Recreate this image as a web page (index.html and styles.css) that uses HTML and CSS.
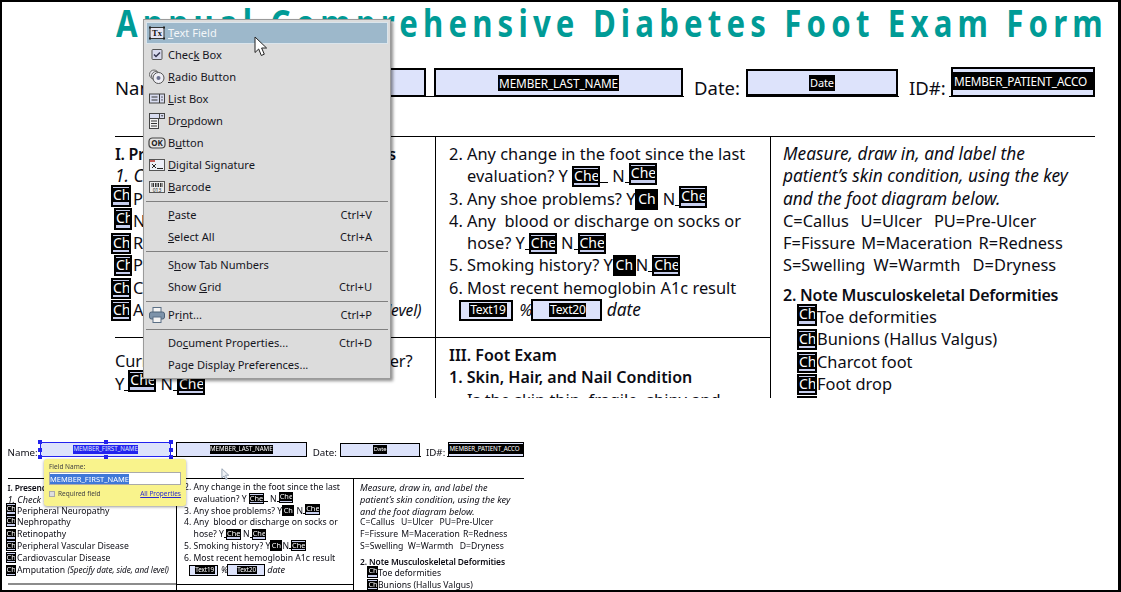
FILE: index.html
```html
<!DOCTYPE html>
<html lang="en">
<head>
<meta charset="utf-8">
<title>Annual Comprehensive Diabetes Foot Exam Form</title>
<link rel="stylesheet" href="styles.css">
</head>
<body>
<div class="frame">
  <section class="upper">
    <h1 class="title">Annual Comprehensive Diabetes Foot Exam Form</h1>
    <div class="doc">
      <div class="namerow">
        <span class="nlabel">Name:</span>
        <span class="ul ul-names">
          <span class="fld f-first"><span class="hl">MEMBER_FIRST_NAME</span></span>
          <span class="fld f-last"><span class="hl">MEMBER_LAST_NAME</span></span>
        </span>
        <span class="nlabel l-date">Date:</span>
        <span class="ul"><span class="fld f-date"><span class="hl">Date</span></span></span>
        <span class="nlabel l-id">ID#:</span>
        <span class="ul ul-id"><span class="fld f-id"><span class="hl">MEMBER_PATIENT_ACCO</span></span></span>
      </div>
      <div class="table">
        <div class="col c1">
          <div class="row b tight">I. Presence of Diabetes Complications</div>
          <div class="row"><i>1. Check all that apply</i></div>
          <div class="row chkrow"><span class="w w-ch up4 shift"><span class="t">Ch</span></span>Peripheral Neuropathy</div>
          <div class="row chkrow"><span class="w w-nar up2 ind"><span class="t">Ch</span></span>Nephropathy</div>
          <div class="row chkrow"><span class="w w-ch shift"><span class="t">Ch</span></span>Retinopathy</div>
          <div class="row chkrow"><span class="w w-nar ind"><span class="t">Ch</span></span>Peripheral Vascular Disease</div>
          <div class="row chkrow"><span class="w w-ch shift"><span class="t">Ch</span></span>Cardiovascular Disease</div>
          <div class="row chkrow"><span class="w w-ch shift"><span class="t">Ch</span></span>Amputation <i class="small-i">(Specify date, side, and level)</i></div>
          <div class="rule"></div>
          <div class="row cur">Current tobacco or other nicotine user?</div>
          <div class="row">Y<span class="blank b-s"></span><span class="w w-che up4"><span class="t">Che</span></span> N<span class="blank b-s"></span><span class="w w-che"><span class="t">Che</span></span></div>
        </div>
        <div class="col c2">
          <div class="sec">
            <div class="row hang"><span class="n">2.</span>Any change in the foot since the last</div>
            <div class="row ind-t">evaluation? Y <span class="w w-che"><span class="t">Cheı</span></span><span class="blank b-t"></span> N<span class="blank b-s"></span><span class="w w-che up2"><span class="t">Che</span></span></div>
            <div class="row hang"><span class="n">3.</span>Any shoe problems? Y<span class="w w-ch solid"><span class="t">Ch</span></span> N<span class="blank b-s"></span><span class="w w-che up2"><span class="t">Che</span></span></div>
            <div class="row hang"><span class="n">4.</span>Any &nbsp;blood or discharge on socks or</div>
            <div class="row ind-t">hose? Y<span class="blank b-s"></span><span class="w w-che"><span class="t">Che</span></span> N<span class="blank b-s"></span><span class="w w-che"><span class="t">Che</span></span></div>
            <div class="row hang"><span class="n">5.</span>Smoking history? Y<span class="w w-ch solid"><span class="t">Ch</span></span>N<span class="blank b-s"></span><span class="w w-che"><span class="t">Cheı</span></span></div>
            <div class="row hang"><span class="n">6.</span>Most recent hemoglobin A1c result</div>
            <div class="row txtrow"><span class="w w-t19"><span class="t">Text19</span></span> <span class="pct">%</span><span class="w w-t20"><span class="t">Text20</span></span> <i>date</i></div>
          </div>
          <div class="sec sec2">
            <div class="row b">III. Foot Exam</div>
            <div class="row b hang-b">1. Skin, Hair, and Nail Condition</div>
            <div class="row ind-t">Is the skin thin, fragile, shiny and</div>
          </div>
        </div>
        <div class="col c3">
          <div class="row"><i>Measure, draw in, and label the</i></div>
          <div class="row"><i>patient’s skin condition, using the key</i></div>
          <div class="row"><i>and the foot diagram below.</i></div>
          <div class="row key1">C=Callus &nbsp; U=Ulcer &nbsp; PU=Pre-Ulcer</div>
          <div class="row key2">F=Fissure &nbsp;M=Maceration &nbsp;R=Redness</div>
          <div class="row key3">S=Swelling &nbsp;W=Warmth &nbsp; D=Dryness</div>
          <div class="row b note">2. Note Musculoskeletal Deformities</div>
          <div class="row c3chk"><span class="w w-ch up2"><span class="t">Ch</span></span>Toe deformities</div>
          <div class="row c3chk"><span class="w w-ch"><span class="t">Ch</span></span>Bunions (Hallus Valgus)</div>
          <div class="row c3chk"><span class="w w-ch"><span class="t">Ch</span></span>Charcot foot</div>
          <div class="row c3chk"><span class="w w-ch"><span class="t">Ch</span></span>Foot drop</div>
          <div class="row c3chk"><span class="w w-ch"><span class="t">Ch</span></span></div>
        </div>
      </div>
    </div>
  </section>

  <section class="lower">
    <div class="doc doc-small">
      <div class="namerow">
        <span class="nlabel">Name:</span>
        <span class="ul ul-names ul-none">
          <span class="fld f-first f-sel"><span class="hl">MEMBER_FIRST_NAME</span>
            <i class="hd h1"></i><i class="hd h2"></i><i class="hd h3"></i><i class="hd h4"></i><i class="hd h5"></i><i class="hd h6"></i><i class="hd h7"></i><i class="hd h8"></i>
          </span>
          <span class="fld f-last"><span class="hl">MEMBER_LAST_NAME</span></span>
        </span>
        <span class="nlabel l-date">Date:</span>
        <span class="ul"><span class="fld f-date"><span class="hl">Date</span></span></span>
        <span class="nlabel l-id">ID#:</span>
        <span class="ul ul-id"><span class="fld f-id"><span class="hl">MEMBER_PATIENT_ACCO</span></span></span>
      </div>
      <div class="table">
        <div class="col c1">
          <div class="row b tight">I. Presence of Diabetes Complications</div>
          <div class="row"><i>1. Check all that apply</i></div>
          <div class="row chkrow"><span class="w w-ch up4 shift"><span class="t">Ch</span></span>Peripheral Neuropathy</div>
          <div class="row chkrow"><span class="w w-ch up2 shift"><span class="t">Ch</span></span>Nephropathy</div>
          <div class="row chkrow"><span class="w w-ch shift"><span class="t">Ch</span></span>Retinopathy</div>
          <div class="row chkrow"><span class="w w-ch shift"><span class="t">Ch</span></span>Peripheral Vascular Disease</div>
          <div class="row chkrow"><span class="w w-ch shift"><span class="t">Ch</span></span>Cardiovascular Disease</div>
          <div class="row chkrow"><span class="w w-ch shift"><span class="t">Ch</span></span>Amputation <i class="small-i">(Specify date, side, and level)</i></div>
          <div class="rule"></div>
        </div>
        <div class="col c2">
          <div class="sec">
            <div class="row hang"><span class="n">2.</span>Any change in the foot since the last</div>
            <div class="row ind-t">evaluation? Y <span class="w w-che"><span class="t">Cheı</span></span><span class="blank b-t"></span> N<span class="blank b-s"></span><span class="w w-che up2"><span class="t">Che</span></span></div>
            <div class="row hang"><span class="n">3.</span>Any shoe problems? Y<span class="w w-ch solid"><span class="t">Ch</span></span> N<span class="blank b-s"></span><span class="w w-che up2"><span class="t">Che</span></span></div>
            <div class="row hang"><span class="n">4.</span>Any &nbsp;blood or discharge on socks or</div>
            <div class="row ind-t">hose? Y<span class="blank b-s"></span><span class="w w-che"><span class="t">Che</span></span> N<span class="blank b-s"></span><span class="w w-che"><span class="t">Che</span></span></div>
            <div class="row hang"><span class="n">5.</span>Smoking history? Y<span class="w w-ch solid"><span class="t">Ch</span></span>N<span class="blank b-s"></span><span class="w w-che"><span class="t">Cheı</span></span></div>
            <div class="row hang"><span class="n">6.</span>Most recent hemoglobin A1c result</div>
            <div class="row txtrow"><span class="w w-t19"><span class="t">Text19</span></span> <span class="pct">%</span><span class="w w-t20"><span class="t">Text20</span></span> <i>date</i></div>
          </div>
          <div class="sec sec2">
            <div class="row b">III. Foot Exam</div>
          </div>
        </div>
        <div class="col c3">
          <div class="row"><i>Measure, draw in, and label the</i></div>
          <div class="row"><i>patient’s skin condition, using the key</i></div>
          <div class="row"><i>and the foot diagram below.</i></div>
          <div class="row key1">C=Callus &nbsp; U=Ulcer &nbsp; PU=Pre-Ulcer</div>
          <div class="row key2">F=Fissure &nbsp;M=Maceration &nbsp;R=Redness</div>
          <div class="row key3">S=Swelling &nbsp;W=Warmth &nbsp; D=Dryness</div>
          <div class="row b note">2. Note Musculoskeletal Deformities</div>
          <div class="row c3chk"><span class="w w-ch up2"><span class="t">Ch</span></span>Toe deformities</div>
          <div class="row c3chk"><span class="w w-ch"><span class="t">Ch</span></span>Bunions (Hallus Valgus)</div>
        </div>
      </div>
    </div>

    <div class="popup">
      <div class="pop-label">Field Name:</div>
      <div class="pop-input"><span class="pop-sel">MEMBER_FIRST_NAME</span></div>
      <div class="pop-foot">
        <span class="pop-check"><span class="pop-box"></span>Required field</span>
        <span class="pop-link">All Properties</span>
      </div>
    </div>
    <svg class="cursor-small" viewBox="0 0 12 18" aria-hidden="true"><path d="M1 1v13l3-3 2.500 5 2-1-2.500-5h4.500z" fill="#eef1f5" stroke="#7b8ba0" stroke-width="1"/></svg>
  </section>

  <nav class="menu">
    <div class="item active">
      <span class="ic"><svg viewBox="0 0 18 18"><rect x="2" y="3.500" width="14" height="11" fill="#e6e6f2" stroke="#333" stroke-width="1"/><rect x="1" y="2.500" width="2" height="2" fill="#222"/><rect x="15" y="2.500" width="2" height="2" fill="#222"/><rect x="1" y="13.500" width="2" height="2" fill="#222"/><rect x="15" y="13.500" width="2" height="2" fill="#222"/><text x="9" y="12" class="svg-tx">Tx</text></svg></span>
      <span class="lb"><u>T</u>ext Field</span>
    </div>
    <div class="item">
      <span class="ic"><svg viewBox="0 0 18 18"><rect x="4" y="3.500" width="10" height="10" rx="1" fill="#d8daee" stroke="#555" stroke-width="1"/><path d="M6 8.500l2 2 4-4" fill="none" stroke="#33344f" stroke-width="1.500"/></svg></span>
      <span class="lb">Chec<u>k</u> Box</span>
    </div>
    <div class="item">
      <span class="ic"><svg viewBox="0 0 18 18"><circle cx="6" cy="6.500" r="4.500" fill="#e8e8ee" stroke="#666"/><circle cx="8" cy="8" r="4.500" fill="#e8e8ee" stroke="#666"/><circle cx="10.500" cy="10" r="5.500" fill="#eeeef4" stroke="#555"/><circle cx="10.500" cy="10" r="2" fill="#6a6f8f"/></svg></span>
      <span class="lb"><u>R</u>adio Button</span>
    </div>
    <div class="item">
      <span class="ic"><svg viewBox="0 0 18 18"><rect x="1.500" y="4" width="15" height="9" fill="#d8dcf0" stroke="#444"/><path d="M11.500 4v9M3.500 7h6M3.500 10h6" stroke="#333" fill="none"/><path d="M13 7.500h2l-1-1.500zM13 9.500h2l-1 1.500z" fill="#333"/></svg></span>
      <span class="lb"><u>L</u>ist Box</span>
    </div>
    <div class="item">
      <span class="ic"><svg viewBox="0 0 18 18"><rect x="1.500" y="1.500" width="15" height="5" fill="#d8dcf0" stroke="#444"/><path d="M11.500 1.500v5" stroke="#444"/><path d="M12.800 3.200h2.600l-1.300 1.600z" fill="#333"/><rect x="1.500" y="6.500" width="9" height="10" fill="#f2f2f2" stroke="#444"/><path d="M3 9h6M3 11.500h6M3 14h6" stroke="#333" fill="none"/></svg></span>
      <span class="lb">Dr<u>o</u>pdown</span>
    </div>
    <div class="item">
      <span class="ic"><svg viewBox="0 0 18 18"><rect x="1" y="4" width="16" height="10" rx="3.500" fill="#e4e4e4" stroke="#444" stroke-width="1.200"/><text x="9" y="12" class="svg-ok">OK</text></svg></span>
      <span class="lb">B<u>u</u>tton</span>
    </div>
    <div class="item">
      <span class="ic"><svg viewBox="0 0 18 18"><rect x="1.500" y="3.500" width="15" height="11" fill="#eceef8" stroke="#555"/><rect x="2" y="4" width="5" height="2" fill="#c05a5a"/><path d="M4 8l4 4M8 8l-4 4" stroke="#222" fill="none"/><path d="M9 12.500h6" stroke="#222"/></svg></span>
      <span class="lb"><u>D</u>igital Signature</span>
    </div>
    <div class="item">
      <span class="ic"><svg viewBox="0 0 18 18"><rect x="1.500" y="3.500" width="15" height="11" fill="#ececec" stroke="#555"/><path d="M4 5v4M5.500 5v4M7.500 5v4M9 5v4M10.500 5v4M12.500 5v4M14 5v4" stroke="#333" fill="none"/><text x="9" y="13.500" class="svg-bar">013</text></svg></span>
      <span class="lb"><u>B</u>arcode</span>
    </div>
    <div class="sep"></div>
    <div class="item"><span class="ic"></span><span class="lb"><u>P</u>aste</span><span class="sc">Ctrl+V</span></div>
    <div class="item"><span class="ic"></span><span class="lb"><u>S</u>elect All</span><span class="sc">Ctrl+A</span></div>
    <div class="sep"></div>
    <div class="item"><span class="ic"></span><span class="lb">S<u>h</u>ow Tab Numbers</span></div>
    <div class="item"><span class="ic"></span><span class="lb">Show <u>G</u>rid</span><span class="sc">Ctrl+U</span></div>
    <div class="sep"></div>
    <div class="item">
      <span class="ic"><svg viewBox="0 0 18 18"><rect x="5" y="1.500" width="8" height="5" fill="#f4f4f4" stroke="#5a6f85"/><rect x="1.500" y="6" width="15" height="7" rx="2" fill="#7d93aa" stroke="#4d6277"/><rect x="5" y="11" width="8" height="5.500" fill="#f4f4f4" stroke="#5a6f85"/></svg></span>
      <span class="lb">Pr<u>i</u>nt...</span><span class="sc">Ctrl+P</span>
    </div>
    <div class="sep"></div>
    <div class="item"><span class="ic"></span><span class="lb">Do<u>c</u>ument Properties...</span><span class="sc">Ctrl+D</span></div>
    <div class="item"><span class="ic"></span><span class="lb">Page Displa<u>y</u> Preferences...</span></div>
  </nav>

  <svg class="cursor" viewBox="0 0 14 22" aria-hidden="true"><path d="M1 1v15.500l3.700-3.500 2.600 6.500 3-1.300-2.700-6.200h5z" fill="#fff" stroke="#222" stroke-width="1"/></svg>
</div>
</body>
</html>
```
FILE: styles.css
```css
* { box-sizing: border-box; }
html, body { margin: 0; padding: 0; background: #fff; }
body { font-family: "Noto Sans", "Open Sans", sans-serif; color: #0c0c14; }

.frame {
  position: relative;
  width: 1121px;
  height: 592px;
  border: solid #000;
  border-width: 2px 3px 2px 2px;
  overflow: hidden;
  background: #fff;
  display: flex;
  flex-direction: column;
}

.upper { height: 396px; flex: none; overflow: hidden; padding-left: 113px; }
.lower { flex: 1; overflow: hidden; position: relative; padding: 43px 0 0 5.6px; filter: blur(.45px); }

.title {
  margin: 0 0 0 1px;
  height: 64px;
  font-size: 38px;
  line-height: 40px;
  font-weight: 700;
  letter-spacing: 6.300px;
  white-space: nowrap;
  color: #009b96;
  transform: scaleX(.82);
  transform-origin: left top;
}

.doc { width: 980px; font-size: 16.400px; }
.doc-small { zoom: .527; }
.doc i { font-size: 17.300px; }
.doc .small-i { font-size: 15.500px; letter-spacing: -.1px; }
.doc .hd { font-size: 0; }

.namerow { display: flex; height: 70px; align-items: flex-start; font-size: 18.500px; }
.nlabel { width: 61px; flex: none; margin-top: 9px; line-height: 26px; }
.l-date { width: 52px; margin-left: 10px; }
.l-id { width: 40px; margin-left: 10px; }
.ul { display: flex; border-bottom: 1px solid #000; height: 31px; padding-right: 1px; align-items: flex-start; }
.ul-names { gap: 8px; }
.ul-id { padding-left: 2px; padding-right: 0; }

.fld {
  display: flex;
  align-items: center;
  justify-content: center;
  border: 2px solid #000;
  background: #dde3fb;
  font-size: 11.800px;
  flex: none;
  position: relative;
  white-space: nowrap;
}
.hl { background: #000; color: #fff; line-height: 16px; padding: 0 1px; letter-spacing: -.1px; }
.f-first { width: 250px; height: 29px; margin-top: 2px; }
.f-last { width: 249px; height: 29px; margin-top: 2px; }
.f-date { width: 152px; height: 27px; margin-top: 3px; font-size: 11px; }
.f-id { width: 144px; height: 30px; margin-top: 1px; overflow: hidden; justify-content: flex-start; align-items: flex-start; }
.f-id .hl { margin-top: 3px; width: 100%; line-height: 18px; padding-left: 1px; letter-spacing: -.2px; }

.f-sel { border: 2px solid #2222ee; }
.f-sel .hl { background: #2222ee; color: #dde3fb; }
.hd { position: absolute; width: 7px; height: 7px; background: #2222ee; }
.h1 { left: -5px; top: -5px; }
.h2 { left: calc(50% - 3px); top: -5px; }
.h3 { right: -5px; top: -5px; }
.h4 { left: -5px; top: calc(50% - 3px); }
.h5 { right: -5px; top: calc(50% - 3px); }
.h6 { left: -5px; bottom: -5px; }
.h7 { left: calc(50% - 3px); bottom: -5px; }
.h8 { right: -5px; bottom: -5px; }

.table { display: grid; grid-template-columns: 320px 335px 325px; border-top: 1px solid #000; height: 600px; }
.col { padding-top: 6px; min-width: 0; }
.c2, .c3 { border-left: 1px solid #000; }
.c2 { padding: 0; }
.c3 { padding-left: 12px; }
.sec { padding: 6px 0 0 13px; height: 201px; border-bottom: 1px solid #000; }
.sec2 { height: auto; border-bottom: 0; padding-top: 6px; }

.row { height: 22.300px; line-height: 22.300px; white-space: nowrap; }
.b { font-weight: 600; font-size: 16px; }
.tight { letter-spacing: -.33px; }
.n { display: inline-block; width: 18px; }
.ind-t { padding-left: 18px; }
.rule { border-bottom: 1px solid #000; height: 17px; }
.doc-small .rule { border-bottom: 4px solid #8c8c8c; }
.cur { margin-top: 12px; letter-spacing: -.13px; }
.note { margin-top: 7px; letter-spacing: -.22px; }
.key1 { word-spacing: -.3px; }
.key2 { word-spacing: -1.200px; }
.key3 { word-spacing: -.2px; }
.c3chk { padding-left: 14px; }
.chkrow { margin-left: -4px; }
.txtrow { padding-left: 10px; }
.pct { margin-left: 2px; font-style: italic; }

.w {
  display: inline-block;
  overflow: hidden;
  height: 21px;
  margin: -8px 0 -4px;
  vertical-align: -1px;
  border: 2px solid #000;
  background: #c8cfee;
  font-size: 14px;
  text-align: center;
}
.t { display: block; background: #000; color: #fff; height: 14px; line-height: 14px; margin-top: 1px; overflow: hidden; white-space: nowrap; }
.up2 { vertical-align: 1px; height: 22px; }
.up4 { vertical-align: 2px; height: 22px; }
.w-ch { width: 20px; }
.w-nar { width: 18px; }
.w-che { width: 28px; }
.solid { background: #000; width: 23px; }
.shift { margin-right: 2px; }
.ind { margin-left: 3px; margin-right: 1px; }
.w-t19, .w-t20 { background: #dde3fb; height: 21px; }
.w-t19 { width: 54px; }
.w-t20 { width: 71px; height: 22px; margin-left: -1px; margin-right: 0; }
.w-t19 .t { margin: 1px 4px 0 8px; font-size: 12px; letter-spacing: -.2px; }
.w-t20 .t { margin: 2px 14px 0 16px; font-size: 12px; letter-spacing: -.2px; }
.blank { display: inline-block; border-bottom: 1px solid #000; height: 1px; vertical-align: -1px; }
.b-s { width: 4px; }
.b-t { width: 8px; }

/* context menu */
.menu {
  position: absolute;
  left: 141px;
  top: 17px;
  width: 248px;
  height: 360px;
  padding: 2px;
  background: #dcdcdc;
  border: 1px solid #9a9a9a;
  box-shadow: 2px 2px 3px rgba(0, 0, 0, .45);
  font-size: 11.100px;
  color: #16161e;
}
.item { display: flex; align-items: center; height: 22px; border: 1px solid transparent; }
.item.active { background: #9db8cb; border-color: #dbe5ec; color: #f3f6f8; }
.ic { width: 21px; flex: none; height: 18px; display: flex; }
.ic svg { width: 18px; height: 18px; margin-left: 1px; }
.lb { flex: 1; white-space: nowrap; margin-top: -2px; }
.sc { margin-right: 15px; margin-top: -2px; }
.sep { height: 6px; display: flex; align-items: center; }
.sep::before { content: ""; display: block; width: 100%; height: 1px; background: #808080; }
.svg-tx { font: bold 8.500px "Liberation Serif", serif; text-anchor: middle; fill: #111; }
.svg-ok { font: bold 8px "Noto Sans", sans-serif; text-anchor: middle; fill: #222; }
.svg-bar { font: 5px "Noto Sans", sans-serif; text-anchor: middle; fill: #222; }

.cursor { position: absolute; left: 252px; top: 34px; width: 14px; height: 22px; }
.cursor-small { position: absolute; left: 219px; top: 70px; width: 9px; height: 13px; }

/* field popup */
.popup {
  position: absolute;
  left: 42px;
  top: 61px;
  width: 142px;
  height: 47px;
  padding: 3px 5px;
  background: #f9f38c;
  border-radius: 3px;
  box-shadow: 0 1px 3px rgba(0, 0, 0, .4);
  font-size: 6.500px;
  color: #444;
}
.pop-label { line-height: 9px; height: 10px; }
.pop-input { height: 13px; background: #fff; border: 1px solid #aaa; display: flex; align-items: center; font-size: 7.500px; }
.pop-sel { background: #3f78d8; color: #fff; line-height: 10px; white-space: nowrap; }
.pop-foot { display: flex; justify-content: space-between; align-items: center; margin-top: 4px; }
.pop-check { display: flex; align-items: center; gap: 3px; }
.pop-box { width: 6px; height: 6px; background: #ddd; border: 1px solid #aaa; }
.pop-link { color: #2a2ad0; text-decoration: underline; }
```
